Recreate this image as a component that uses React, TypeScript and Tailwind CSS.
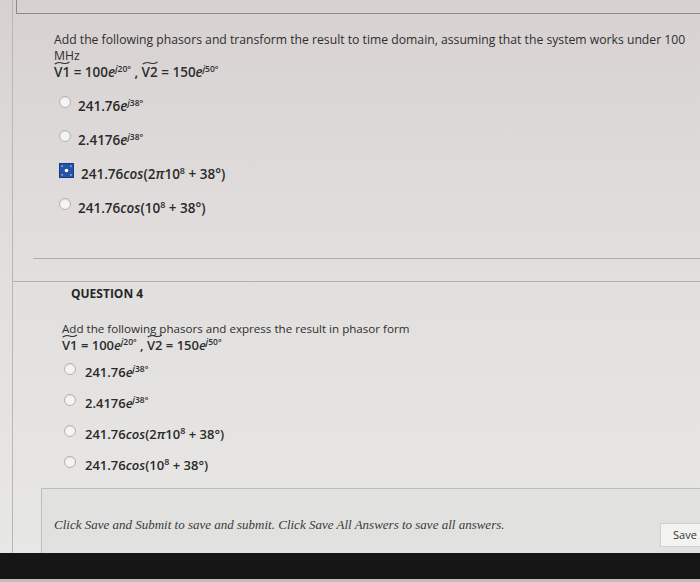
import React from "react";

const sans = { fontFamily: '"Open Sans", "Noto Sans", sans-serif' };

function Tilde({ children }: { children: React.ReactNode }) {
  return (
    <span className="relative inline-block">
      <svg
        className="absolute left-0 -top-[3px] w-full h-[4px]"
        viewBox="0 0 12 4"
        preserveAspectRatio="none"
      >
        <path d="M0.5 3.2 Q3 0.4 6 2 T11.5 0.8" fill="none" stroke="#333" strokeWidth="1" />
      </svg>
      {children}
    </span>
  );
}

function Exp({ v }: { v: string }) {
  return (
    <>
      <i>e</i>
      <sup className="text-[8.5px] font-semibold -top-[5px]">
        <i>j</i>
        {v}
      </sup>
    </>
  );
}

function Given({ size }: { size: string }) {
  return (
    <div className={`font-semibold ${size}`}>
      <Tilde>V1</Tilde> = 100
      <Exp v="20°" /> , <Tilde>V2</Tilde> = 150
      <Exp v="50°" />
    </div>
  );
}

const answers: React.ReactNode[] = [
  <>
    241.76
    <Exp v="38°" />
  </>,
  <>
    2.4176
    <Exp v="38°" />
  </>,
  <>
    241.76<i>cos</i>(2<i>π</i>10
    <sup className="text-[9px] -top-[5px]">8</sup> + 38°)
  </>,
  <>
    241.76<i>cos</i>(10
    <sup className="text-[9px] -top-[5px]">8</sup> + 38°)
  </>,
];

function Radio() {
  return (
    <span className="block w-[12px] h-[12px] rounded-full border border-[#b3b1b0] bg-[#f5f4f3] shadow-[inset_0_1px_1px_rgba(0,0,0,0.08)]" />
  );
}

function Checked() {
  return (
    <svg width="15" height="15" viewBox="0 0 15 15" className="block">
      <rect x="0.5" y="0.5" width="14" height="14" fill="#2553ab" stroke="#1a3b7e" />
      <circle cx="7.5" cy="7.5" r="1.8" fill="#fff" />
      <rect x="2.5" y="2.5" width="1.3" height="1.3" fill="#dbe4f7" />
      <rect x="11.2" y="2.5" width="1.3" height="1.3" fill="#dbe4f7" />
      <rect x="2.5" y="11.2" width="1.3" height="1.3" fill="#dbe4f7" />
      <rect x="11.2" y="11.2" width="1.3" height="1.3" fill="#dbe4f7" />
    </svg>
  );
}

function Options({
  rowH,
  checked,
  radioX,
  textX,
  size,
}: {
  rowH: string;
  checked?: number;
  radioX: string;
  textX: string;
  size: string;
}) {
  return (
    <div className="flex flex-col">
      {answers.map((a, i) => (
        <div key={i} className={`flex items-center ${rowH}`}>
          <div className={`${radioX} ${textX} -mt-[8px] shrink-0`}>
            {checked === i ? <Checked /> : <Radio />}
          </div>
          <div className={`font-semibold ${size} text-[#2a2a2a]`}>{a}</div>
        </div>
      ))}
    </div>
  );
}

export default function App() {
  return (
    <div
      className="w-[700px] h-[582px] overflow-hidden flex flex-col bg-linear-to-b from-[#d7d2d1] via-[#e2e0df] to-[#e8e8e6] text-[#2e2e2e]"
      style={sans}
    >
      <div className="h-[553px] ml-[12px] border-l border-[#b9b7b6] flex flex-col">
        <div className="h-[14px] ml-[3px] border-l border-b border-[#8e8b8a] shrink-0" />

        <section className="ml-[41px] mt-[18px] w-[640px] text-[12.2px] leading-[16px]">
          <p>
            Add the following phasors and transform the result to time domain, assuming that the
            system works under 100 MHz
          </p>
          <Given size="text-[13.5px]" />
        </section>

        <div className="ml-[3px] mt-[9px]">
          <Options
            rowH="h-[34px]"
            checked={2}
            radioX="ml-[43px]"
            textX="mr-[7px]"
            size="text-[13.5px]"
          />
        </div>

        <div className="ml-[20px] mt-[33px] border-t border-[#aeadab]" />
        <div className="mt-[22px] border-t border-[#b2b1af]" />

        <h2 className="ml-[58px] mt-[4px] text-[12px] leading-[16px] font-bold text-[#262626]">
          QUESTION 4
        </h2>

        <section className="ml-[49px] mt-[19px] text-[11.6px] leading-[16px]">
          <p>Add the following phasors and express the result in phasor form</p>
          <Given size="text-[13px]" />
        </section>

        <div className="mt-[4px]">
          <Options rowH="h-[31px]" radioX="ml-[51px]" textX="mr-[9px]" size="text-[13px]" />
        </div>

        <div className="ml-[28px] mt-[7px] flex-1 border-l border-t border-[#bdbdbb] bg-[#e1e2df] flex items-start">
          <p
            className="ml-[12px] mt-[26px] text-[13px] italic text-[#3a3a3a]"
            style={{ fontFamily: '"Liberation Serif", "DejaVu Serif", serif' }}
          >
            Click Save and Submit to save and submit. Click Save All Answers to save all answers.
          </p>
          <div className="ml-auto -mr-[70px] mt-[34px] h-[24px] w-[110px] shrink-0 border border-[#cfcfcd] bg-[#f3f3f2] pl-[12px] text-[11px] leading-[22px] text-[#333]">
            Save All Answers
          </div>
        </div>
      </div>
      <div className="h-[26px] bg-[#171616]" />
      <div className="h-[3px] bg-[#bdbdbb]" />
    </div>
  );
}
